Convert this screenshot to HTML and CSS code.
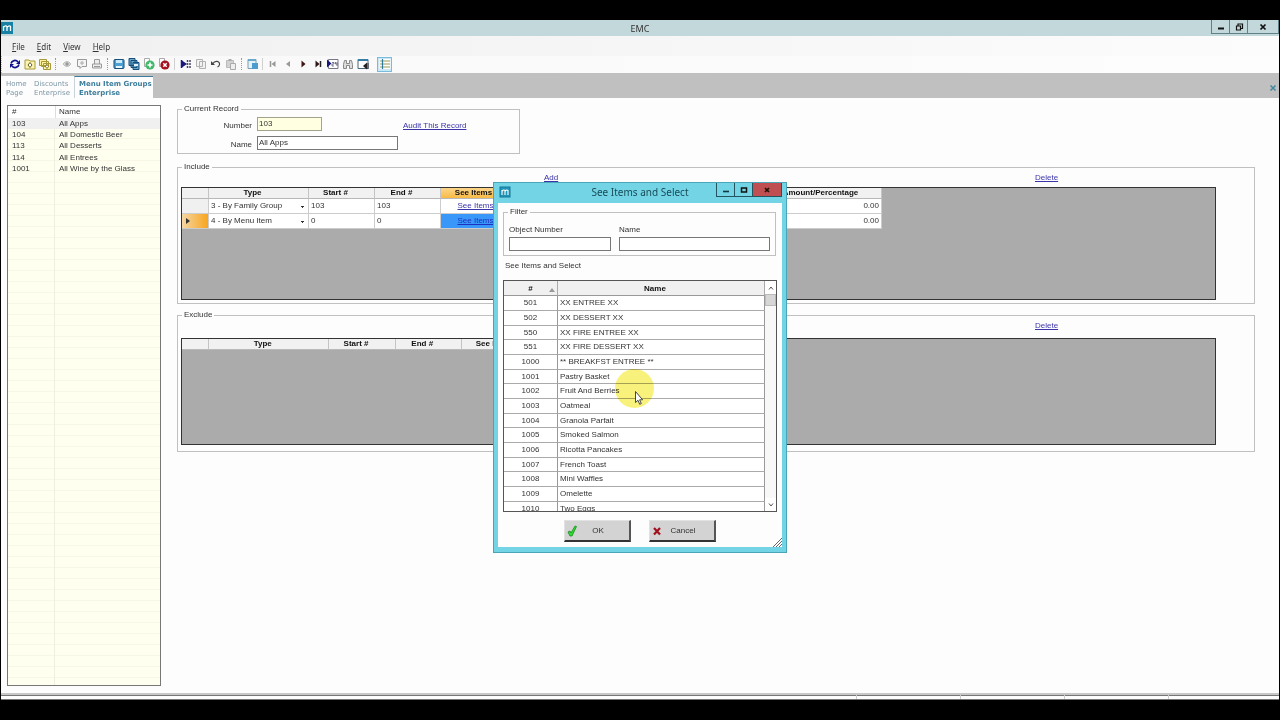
FILE: index.html
```html
<!DOCTYPE html>
<html lang="en">
<head>
<meta charset="utf-8">
<title>EMC</title>
<link rel="stylesheet" href="styles.css">
</head>
<body>
<div class="window">
  <header class="titlebar">
    <svg class="logo" viewBox="0 0 12 12"><rect width="12" height="12" fill="#1681a5"/><path d="M2.5 9V4M2.5 5.5Q4 3 6 4.500V9M6 5.500Q8 3 9.500 4.500V9" fill="none" stroke="#fff" stroke-width="1.300"/></svg>
    <h1>EMC</h1>
    <div class="controls">
      <button aria-label="Minimize"><svg viewBox="0 0 12 12"><path d="M3 7.500h6" stroke="#111" stroke-width="2"/></svg></button>
      <button aria-label="Restore"><svg viewBox="0 0 12 12"><path d="M3.500 5h4v4h-4zM5 4.500V3h4.500v4.500H8" fill="none" stroke="#111" stroke-width="1.200"/></svg></button>
      <button class="wide" aria-label="Close"><svg viewBox="0 0 12 12"><path d="M3.500 3.500l5 5M8.500 3.500l-5 5" stroke="#111" stroke-width="1.700"/></svg></button>
    </div>
  </header>

  <nav class="menubar">
    <button><u>F</u>ile</button><button><u>E</u>dit</button><button><u>V</u>iew</button><button><u>H</u>elp</button>
  </nav>

  <div class="toolbar">
    <button aria-label="Refresh"><svg viewBox="0 0 12 12"><path d="M2 5.500A4 4 0 0 1 9 4M10 6.500A4 4 0 0 1 3 8" fill="none" stroke="#10128c" stroke-width="1.700"/><path d="M11 2v4H7zM1 10V6h4z" fill="#10128c"/></svg></button>
    <button aria-label="Open record"><svg viewBox="0 0 12 12"><path d="M1 2h4l1 1h5v8H1z" fill="#fbf3b4" stroke="#a89a38"/><path d="M6 4.500L8 7 6 9.500 4 7z" fill="#fff" stroke="#665d20"/></svg></button>
    <button aria-label="Open all"><svg viewBox="0 0 12 12"><path d="M.5 1.500h7v6h-7zM2.500 3.500h7v5h-7zM4.500 5.500h7v6h-7z" fill="#fbf3a0" stroke="#a89a38"/><path d="M8 6.500l1.500 2L8 10.500 6.500 8.500z" fill="#fff" stroke="#665d20" stroke-width=".8"/></svg></button>
    <span class="sep dotted"></span>
    <button aria-label="View"><svg viewBox="0 0 12 12"><path d="M2 6q4-5 8 0-4 5-8 0z" fill="#ddd" stroke="#bbb"/><circle cx="6" cy="6" r="1.700" fill="#999"/></svg></button>
    <button aria-label="Comment"><svg viewBox="0 0 12 12"><path d="M1.500 1.500h9v7H6l-2 2v-2H1.500z" fill="#f4f4f4" stroke="#999"/><path d="M6 3v4M4 5h4" stroke="#aaa"/></svg></button>
    <button aria-label="Print"><svg viewBox="0 0 12 12"><path d="M3.500 6V1.500h5V6M1.500 6h9v4h-9z" fill="#eee" stroke="#999"/><path d="M3 8.500h6" stroke="#999"/></svg></button>
    <span class="sep dotted"></span>
    <button aria-label="Save"><svg viewBox="0 0 12 12"><rect x="1" y="1.500" width="10" height="9" rx="1" fill="#4c9fd0" stroke="#174d78"/><path d="M3 2h6v3H3z" fill="#cdeaf8"/><path d="M3 8h6v2H3z" fill="#e8f5fb"/></svg></button>
    <button aria-label="Save all"><svg viewBox="0 0 12 12"><path d="M1 .5h6v7H1zM3 2.500h6v7H3zM5 4.500h6v7H5z" fill="#68a9cc" stroke="#174d78"/><path d="M6 6h4v2H6z" fill="#dff2fa"/></svg></button>
    <button aria-label="Add record"><svg viewBox="0 0 12 12"><path d="M1.500.5h5v8h-5z" fill="#fff" stroke="#aaa"/><circle cx="7" cy="7" r="4.600" fill="#43b86b"/><path d="M7 4.500v5M4.500 7h5" stroke="#fff" stroke-width="1.600"/></svg></button>
    <button aria-label="Delete record"><svg viewBox="0 0 12 12"><path d="M1.500.5h5v8h-5z" fill="#fff" stroke="#aaa"/><circle cx="7" cy="7" r="4.600" fill="#a5121f"/><path d="M5.300 5.300l3.400 3.400M8.700 5.300L5.300 8.700" stroke="#fff" stroke-width="1.500"/></svg></button>
    <span class="sep line"></span>
    <button aria-label="Distribute"><svg viewBox="0 0 12 12"><path d="M1.500 2v8" stroke="#19197d" stroke-width="1.500"/><path d="M2 2.500L7 6 2 9.500z" fill="#19197d"/><path d="M7.500 2v8M10 2v8" stroke="#446" stroke-width="1.500" stroke-dasharray="2 1"/></svg></button>
    <button aria-label="Copy"><svg viewBox="0 0 12 12"><path d="M1.500 1.500h6v7h-6zM4.500 3.500h6v7h-6z" fill="#f2f2f2" stroke="#b2b2b2"/></svg></button>
    <button aria-label="Undo"><svg viewBox="0 0 12 12"><path d="M2.500 6C5 2 10 3 9.500 6.500 9.300 8 8.500 8.500 7.500 9" fill="none" stroke="#444" stroke-width="1.200"/><path d="M1 3v4h4z" fill="#444"/></svg></button>
    <button aria-label="Paste"><svg viewBox="0 0 12 12"><path d="M1.500 2.500h7v7h-7z" fill="#d2d2d2" stroke="#bbb"/><path d="M3.500 1h3v2h-3z" fill="#aaa"/><path d="M5.500 5.500h5v6h-5z" fill="#eee" stroke="#aaa"/></svg></button>
    <span class="sep dotted"></span>
    <button aria-label="New window"><svg viewBox="0 0 12 12"><path d="M1 1.500h8v9H1z" fill="#e6f2f8" stroke="#7b9db0"/><path d="M1 2h8" stroke="#68a9cc" stroke-width="2"/><rect x="5" y="5" width="6" height="6" fill="#4c9cd0"/></svg></button>
    <span class="sep line short"></span>
    <button aria-label="First"><svg viewBox="0 0 12 12"><path d="M3.500 3v6" stroke="#999" stroke-width="1.500"/><path d="M8.500 3v6L4.500 6z" fill="#999"/></svg></button>
    <button aria-label="Previous"><svg viewBox="0 0 12 12"><path d="M8 3v6L4 6z" fill="#999"/></svg></button>
    <button aria-label="Next"><svg viewBox="0 0 12 12"><path d="M4.500 2.500v7l4-3.500z" fill="#421414"/></svg></button>
    <button aria-label="Last"><svg viewBox="0 0 12 12"><path d="M3.500 2.500v7l4-3.500z" fill="#321414"/><path d="M8.500 3v6" stroke="#222" stroke-width="1.500"/></svg></button>
    <button aria-label="Go to record"><svg viewBox="0 0 12 12"><path d="M1.500 1.500h9.500v9H1.500z" fill="#fff" stroke="#778"/><path d="M0 1.500v8L4.500 5.500z" fill="#15157d"/><path d="M5 4.500h2v1.500H5V8h2M8.500 4v2H10.500M10 4v4" fill="none" stroke="#446" stroke-width=".7"/></svg></button>
    <button aria-label="Find"><svg viewBox="0 0 12 12"><path d="M2.500 2.500h2v3h3v-3h2l1 4v4h-3V7.500h-3v3h-3v-4z" fill="#ddd" stroke="#888"/></svg></button>
    <button aria-label="Find window"><svg viewBox="0 0 12 12"><path d="M1 1.500h10v9H1z" fill="#fff" stroke="#467"/><path d="M1 2h10" stroke="#357fa6" stroke-width="2"/><path d="M6 8l4-3.500v7z" fill="#222"/><path d="M11 5v6" stroke="#333"/></svg></button>
    <span class="sep"></span>
    <button class="pressed" aria-label="Table view"><svg viewBox="0 0 12 12"><rect x=".5" y="1" width="11" height="10" fill="#fff"/><path d="M1 3h10M1 6h10M1 9h10" stroke="#9a9a58"/><path d="M3.500 1v10" stroke="#2878a2" stroke-width="1.200"/></svg></button>
  </div>

  <nav class="tabs">
    <a href="#home">Home<br>Page</a>
    <a href="#discounts">Discounts<br>Enterprise</a>
    <a href="#groups" class="active">Menu Item Groups<br>Enterprise</a>
    <button class="tab-close" aria-label="Close tab"><svg viewBox="0 0 8 8"><path d="M1.500 1.500l5 5M6.500 1.500l-5 5" stroke="#43879f" stroke-width="1.500"/></svg></button>
  </nav>

  <main class="workspace">
    <div class="record-list">
      <table>
        <thead><tr><th class="id">#</th><th>Name</th></tr></thead>
        <tbody>
          <tr class="selected"><td>103</td><td>All Apps</td></tr>
          <tr><td>104</td><td>All Domestic Beer</td></tr>
          <tr><td>113</td><td>All Desserts</td></tr>
          <tr><td>114</td><td>All Entrees</td></tr>
          <tr><td>1001</td><td>All Wine by the Glass</td></tr>
        </tbody>
      </table>
    </div>

    <div class="details">
      <fieldset class="current">
        <legend>Current Record</legend>
        <div class="form">
          <label for="num">Number</label><input id="num" class="number" value="103">
          <a href="#audit">Audit This Record</a>
          <label for="nam">Name</label><input id="nam" class="name" value="All Apps">
        </div>
      </fieldset>

      <fieldset class="group">
        <legend>Include</legend>
        <div class="links"><a href="#add">Add</a><a href="#delete">Delete</a></div>
        <div class="sheet">
          <table class="include">
            <colgroup><col class="c-mark"><col class="c-type"><col class="c-num"><col class="c-num"><col class="c-see"><col class="c-gap"><col class="c-amount"></colgroup>
            <thead><tr><th></th><th>Type</th><th>Start #</th><th>End #</th><th class="see-head hot">See Items</th><th></th><th class="last">Amount/Percentage</th></tr></thead>
            <tbody>
              <tr><td class="mark"></td><td><select aria-label="Type"><option>3 - By Family Group</option></select></td><td>103</td><td>103</td><td class="see"><a href="#see">See Items</a></td><td></td><td class="amount">0.00</td></tr>
              <tr><td class="mark hot"><svg viewBox="0 0 4 6"><path d="M0 0l4 3-4 3z" fill="#333"/></svg></td><td><select aria-label="Type"><option>4 - By Menu Item</option></select></td><td>0</td><td>0</td><td class="see active"><a href="#see">See Items</a></td><td></td><td class="amount">0.00</td></tr>
            </tbody>
          </table>
        </div>
      </fieldset>

      <fieldset class="group">
        <legend>Exclude</legend>
        <div class="links"><a href="#add">Add</a><a href="#delete">Delete</a></div>
        <div class="sheet">
          <table class="exclude">
            <colgroup><col class="c-mark"><col class="c-type"><col class="c-num"><col class="c-num"><col class="c-see"></colgroup>
            <thead><tr><th></th><th>Type</th><th>Start #</th><th>End #</th><th class="see-head">See Items</th></tr></thead>
          </table>
        </div>
      </fieldset>
    </div>
  </main>

  <footer class="status"><span></span><span></span><span></span><span></span></footer>
</div>

<section class="dialog" role="dialog" aria-labelledby="dlg-title">
  <header class="dialog-title">
    <svg class="logo" viewBox="0 0 12 12"><rect x="1" y="1" width="10" height="10" fill="#2296b6" stroke="#14799c"/><path d="M3 9V4M3 5.500Q4.500 3 6 4.500V9M6 5.500Q7.500 3 9 4.500V9" fill="none" stroke="#fff" stroke-width="1.100"/></svg>
    <h2 id="dlg-title">See Items and Select</h2>
    <div class="controls">
      <button aria-label="Minimize"><svg viewBox="0 0 12 12"><path d="M3 7.500h6" stroke="#103840" stroke-width="1.600"/></svg></button>
      <button aria-label="Maximize"><svg viewBox="0 0 12 12"><path d="M3.500 4h5v4h-5z" fill="none" stroke="#111" stroke-width="1.500"/></svg></button>
      <button class="wide close" aria-label="Close"><svg viewBox="0 0 12 12"><path d="M4 4l4 4M8 4L4 8" stroke="#210" stroke-width="1.700"/></svg></button>
    </div>
  </header>
  <div class="dialog-body">
    <fieldset class="filter">
      <legend>Filter</legend>
      <div class="filter-fields">
        <label class="f-num">Object Number<input></label>
        <label class="f-name">Name<input></label>
      </div>
    </fieldset>
    <p>See Items and Select</p>
    <div class="picker">
      <div class="picker-rows">
        <table>
          <thead><tr><th class="id">#<svg viewBox="0 0 6 4"><path d="M0 4l3-4 3 4z" fill="#999"/></svg></th><th>Name</th></tr></thead>
          <tbody>
            <tr><td>501</td><td>XX ENTREE XX</td></tr>
            <tr><td>502</td><td>XX DESSERT XX</td></tr>
            <tr><td>550</td><td>XX FIRE ENTREE XX</td></tr>
            <tr><td>551</td><td>XX FIRE DESSERT XX</td></tr>
            <tr><td>1000</td><td>** BREAKFST ENTREE **</td></tr>
            <tr><td>1001</td><td>Pastry Basket</td></tr>
            <tr><td>1002</td><td>Fruit And Berries</td></tr>
            <tr><td>1003</td><td>Oatmeal</td></tr>
            <tr><td>1004</td><td>Granola Parfait</td></tr>
            <tr><td>1005</td><td>Smoked Salmon</td></tr>
            <tr><td>1006</td><td>Ricotta Pancakes</td></tr>
            <tr><td>1007</td><td>French Toast</td></tr>
            <tr><td>1008</td><td>Mini Waffles</td></tr>
            <tr><td>1009</td><td>Omelette</td></tr>
            <tr><td>1010</td><td>Two Eggs</td></tr>
          </tbody>
        </table>
      </div>
      <div class="scrollbar">
        <button aria-label="Scroll up"><svg viewBox="0 0 6 4"><path d="M1 3.500l2-2.500 2 2.500" fill="none" stroke="#555"/></svg></button>
        <span class="thumb"></span>
        <button class="down" aria-label="Scroll down"><svg viewBox="0 0 6 4"><path d="M1 .5L3 3 5 .5" fill="none" stroke="#555"/></svg></button>
      </div>
    </div>
    <div class="actions">
      <button><svg viewBox="0 0 10 12"><path d="M1 7l2-1 1 2 4-7 1.500.5L5 11H3z" fill="#2fe02f" stroke="#148a1c" stroke-width=".8"/></svg><span>OK</span></button>
      <button><svg viewBox="0 0 10 12"><path d="M2 3l6 6.500M8 3L2 9.500" stroke="#a0101c" stroke-width="2.200"/></svg><span>Cancel</span></button>
    </div>
  </div>
  <svg class="grip" viewBox="0 0 9 9"><path d="M0 9l9-9M3 9l6-6M6 9l3-3" stroke="#555" stroke-width=".9"/></svg>
</section>

<div class="spot"></div>
<svg class="cursor" viewBox="0 0 8 14"><path d="M.5.5v11l2.500-2.200 1.700 4 1.600-.7-1.700-3.800h3z" fill="#fff" stroke="#333" stroke-width=".9"/></svg>
</body>
</html>
```
FILE: styles.css
```css
* { box-sizing: border-box; }
body {
  margin: 0;
  height: 100vh;
  padding: 20px 1px;
  background: #000;
  color: #333;
  font: 8px/10px "Liberation Sans", Arial, sans-serif;
  display: flex;
  position: relative;
  overflow: hidden;
}
button, input, select { font: inherit; color: inherit; margin: 0; padding: 0; border: 0; background: none; border-radius: 0; }
button { display: flex; align-items: center; justify-content: center; }
svg { display: block; }
a { color: #3a34a8; }
h1, h2, p { margin: 0; font-weight: 400; }
table { border-collapse: separate; border-spacing: 0; }
th, td { padding: 0; }
fieldset { margin: 0; padding: 0; border: 1px solid #c0c0c0; min-width: 0; }
legend { margin-left: 4px; padding: 0 2px; }

.window { flex: 1; display: flex; flex-direction: column; background: #fdfdfd; min-width: 0; }
.logo { width: 12px; height: 12px; }

.titlebar { display: flex; height: 16px; background: #c3d8db; position: relative; }
.titlebar .logo { margin: 2px 0 0 0; }
.titlebar h1 { flex: 1; text-align: center; font: 9px/17px "Noto Sans", sans-serif; margin-left: 56px; }
.controls { display: flex; }
.controls button { width: 18px; height: 14px; border: 1px solid #5f8087; border-width: 0 0 1px 1px; }
.controls .wide { width: 32px; border-right-width: 1px; }
.controls svg { width: 12px; height: 12px; }

.menubar { display: flex; gap: 12px; height: 20px; padding: 1px 0 0 11px; background: linear-gradient(90deg, #f0f0f0, #fcfcfc); font: 8px/10px "Noto Sans", sans-serif; align-items: center; }
.toolbar { display: flex; align-items: center; height: 17px; padding: 0 0 1px 5px; background: linear-gradient(90deg, #f8f8f8, #fdfdfd); border-left: 1px dotted #bbb; }
.toolbar button { width: 15px; height: 15px; }
.toolbar button svg { width: 12px; height: 12px; }
.toolbar .pressed { background: #cbe6f5; border: 1px solid #79bbdd; }
.sep { width: 7px; height: 12px; display: flex; justify-content: center; }
.sep.dotted::before { content: ""; border-left: 1px dotted #999; }
.sep.line::before { content: ""; border-left: 1px solid #d0d0d0; }
.sep.short { width: 5px; }

.tabs { display: flex; height: 25px; background: #c0c0c0; padding-top: 3px; font: 7px/9px "DejaVu Sans", sans-serif; position: relative; }
.tabs a { color: #7e98a6; background: #fdfdfd; text-decoration: none; padding: 4px 0 0 5px; width: 28px; white-space: nowrap; }
.tabs a:nth-child(2) { width: 45px; padding-left: 5px; }
.tabs a.active { width: 79px; font-weight: 700; color: #3c7d9c; border-top: 1px solid #3c7d9c; border-left: 1px solid #c8d4da; padding: 3px 0 0 4px; }
.tab-close { margin: 8px 2px 0 auto; width: 8px; height: 8px; }
.tab-close svg { width: 8px; height: 8px; }

.workspace { flex: 1; display: flex; gap: 16px; padding: 7px 24px 7px 6px; min-height: 0; }
.record-list {
  width: 154px;
  border: 1px solid #777;
  background: linear-gradient(90deg, transparent 46px, #efeee0 46px, #efeee0 47px, transparent 47px), repeating-linear-gradient(#fffff0 0 10px, #f8f7e6 10px 11px);
}
.record-list table { width: 100%; table-layout: fixed; color: #333; }
.record-list tr { height: 11px; }
.record-list tr:nth-child(3n) { height: 12px; }
.record-list th { font-weight: 400; text-align: left; background: #fff; padding-left: 4px; height: 12px; }
.record-list th + th { border-left: 1px solid #ddd; padding-left: 3px; }
.record-list td { padding-left: 4px; }
.record-list .id { width: 47px; }
.record-list .selected td { background: #f0f0f0; }

.details { flex: 1; min-width: 0; display: flex; flex-direction: column; margin-top: -1px; }
.current { width: 343px; height: 50px; margin-bottom: 8px; }
.form { display: grid; grid-template-columns: 74px 141px auto; column-gap: 5px; row-gap: 5px; padding-top: 3px; justify-content: start; align-items: center; }
.form label { text-align: right; padding-top: 3px; }
.form a { padding-top: 3px; }
.form input { height: 14px; border: 1px solid #777; background: #fff; padding: 0 1px 1px; }
.form .number { width: 65px; background: #ffffe1; border-color: #a3a38c; }
.form .name { width: 141px; }

.group { height: 142px; margin-bottom: 6px; }
.links { display: grid; grid-template-columns: 491px auto; justify-content: start; padding-left: 366px; height: 15px; padding-top: 1px; }
.sheet { margin: 0 38px 0 3px; border: 1px solid #333; background: #ababab; height: 113px; }
.group + .group .sheet { height: 107px; margin-top: 3px; }
.sheet table { table-layout: fixed; width: 700px; }
.sheet .exclude { width: 346px; }
.c-mark { width: 27px; }
.c-type { width: 100px; }
.exclude .c-type { width: 120px; }
.c-num, .c-see { width: 66px; }
.c-amount { width: 122px; }
.sheet th { height: 11px; background: #f1f1f1; border-right: 1px solid #c4c4c4; border-bottom: 1px solid #b8b8b8; font-weight: 700; color: #111; padding-right: 12px; }
.sheet th.see-head, .sheet th.last { padding-right: 0; }
.sheet th.hot { background: linear-gradient(#fcd58c, #f8ba45); }
.sheet td { height: 15px; background: #fff; border-right: 1px solid #ccc; border-bottom: 1px solid #ccc; padding: 0 2px; }
.sheet td.mark { background: #f0f0f0; }
.sheet td.mark.hot { background: linear-gradient(90deg, #f5d6a4, #f8a51e); }
.mark svg { width: 4px; height: 6px; margin-left: 2px; }
.sheet select { display: block; width: 100%; height: 13px; appearance: none; background: linear-gradient(#333, #333) right 2px center / 3px 1px no-repeat, linear-gradient(#333, #333) right 3px top 7px / 1px 1px no-repeat; }
.sheet .see { text-align: center; padding-left: 6px; }
.sheet .see.active { background: #3897f8; }
.see.active a { color: #2030c0; }
.sheet .amount { text-align: right; }

.status { height: 7px; border-top: 2px solid #c8c8c8; border-bottom: 1px solid #777; display: flex; justify-content: flex-end; padding-right: 7px; box-shadow: inset 0 1px #777; }
.status span { width: 104px; border-left: 1px solid #ccc; }

.dialog { position: absolute; left: 493px; top: 182px; width: 294px; display: flex; flex-direction: column; background: #73d4e6; border: 1px solid #4ba5b8; padding: 0 4px 5px; }
.dialog-title { display: flex; height: 20px; }
.dialog-title .logo { margin: 3px 0 0 1px; }
.dialog-title h2 { flex: 1; text-align: center; font: 10px/19px "Noto Sans", sans-serif; color: #174b56; padding-left: 53px; }
.dialog-title .controls button { border-color: #24545f; }
.dialog-title .controls .close { width: 30px; background: #bf4f50; }
.dialog-body { background: #fdfdfd; padding: 4px 5px 5px; }
.filter { height: 49px; margin-right: 1px; }
.filter-fields { display: flex; gap: 8px; padding: 8px 5px 0; }
.filter label { display: flex; flex-direction: column; gap: 2px; }
.filter input { height: 14px; border: 1px solid #777; background: #fff; }
.f-num { width: 102px; }
.f-name { flex: 1; }
.dialog p { padding: 5px 2px 9px; }
.picker { display: flex; height: 232px; border: 1px solid #555; background: #fff; }
.picker-rows { flex: 1; overflow: hidden; }
.picker table { width: 100%; table-layout: fixed; }
.picker tr { height: 15px; }
.picker tr:nth-child(3n) { height: 14px; }
.picker th { background: #f0f0f0; font-weight: 700; color: #111; border-right: 1px solid #aaa; border-bottom: 1px solid #999; padding: 1px 12px 0 0; }
.picker th svg { width: 6px; height: 4px; float: right; margin: 4px 2px 0 -8px; }
.picker .id { width: 54px; padding-right: 0; }
.picker td { border-right: 1px solid #999; border-bottom: 1px solid #aaa; padding: 0 2px; }
.picker td:first-child { text-align: center; }
.scrollbar { width: 11px; display: flex; flex-direction: column; background: #f8f8f8; }
.scrollbar button { height: 13px; background: #fff; }
.scrollbar svg { width: 6px; height: 4px; }
.scrollbar .thumb { height: 12px; background: #d6d6d6; border: 1px solid #bbb; }
.scrollbar .down { margin-top: auto; }
.actions { display: flex; gap: 18px; justify-content: center; padding-top: 8px; }
.actions button { width: 67px; height: 22px; background: #d3d3d3; border: 1px solid #e2e2e2; border-right: 2px solid #555; border-bottom: 2px solid #333; justify-content: flex-start; padding-left: 2px; }
.actions svg { width: 10px; height: 12px; }
.actions span { flex: 1; text-align: center; padding-right: 10px; }
.grip { position: absolute; right: 4px; bottom: 5px; width: 9px; height: 9px; }

.spot { position: absolute; left: 615px; top: 369px; width: 39px; height: 39px; border-radius: 50%; background: #f8f27c; mix-blend-mode: multiply; }
.cursor { position: absolute; left: 635px; top: 391px; width: 8px; height: 14px; }
```
